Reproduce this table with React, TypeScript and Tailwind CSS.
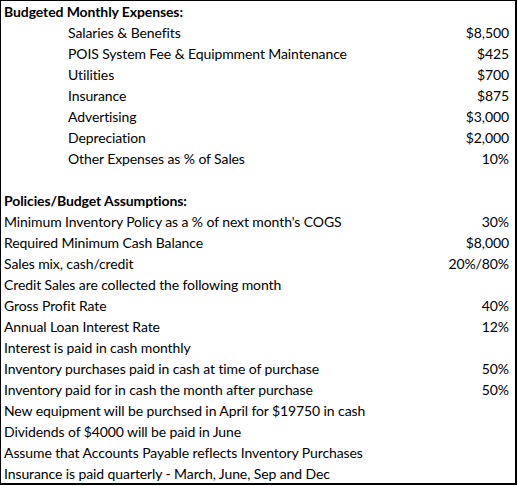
type Row = { label?: string; value?: string; bold?: boolean; indent?: boolean };

const rows: Row[] = [
  { label: "Budgeted Monthly Expenses:", bold: true },
  { label: "Salaries & Benefits", value: "$8,500", indent: true },
  { label: "POIS System Fee & Equipmment Maintenance", value: "$425", indent: true },
  { label: "Utilities", value: "$700", indent: true },
  { label: "Insurance", value: "$875", indent: true },
  { label: "Advertising", value: "$3,000", indent: true },
  { label: "Depreciation", value: "$2,000", indent: true },
  { label: "Other Expenses as % of Sales", value: "10%", indent: true },
  {},
  { label: "Policies/Budget Assumptions:", bold: true },
  { label: "Minimum Inventory Policy as a % of next month's COGS", value: "30%" },
  { label: "Required Minimum Cash Balance", value: "$8,000" },
  { label: "Sales mix, cash/credit", value: "20%/80%" },
  { label: "Credit Sales are collected the following month" },
  { label: "Gross Profit Rate", value: "40%" },
  { label: "Annual Loan Interest Rate", value: "12%" },
  { label: "Interest is paid in cash monthly" },
  { label: "Inventory purchases paid in cash at time of purchase", value: "50%" },
  { label: "Inventory paid for in cash the month after purchase", value: "50%" },
  { label: "New equipment will be purchsed in April for $19750 in cash" },
  { label: "Dividends of $4000 will be paid in June" },
  { label: "Assume that Accounts Payable reflects Inventory Purchases" },
  { label: "Insurance is paid quarterly - March, June, Sep and Dec" },
];

export default function App() {
  return (
    <div className="h-[486px] w-[518px] bg-white">
      <div className="h-[485px] w-[517px] border-l border-t border-r-2 border-b-2 border-black font-['Lato',sans-serif] text-[14px] tracking-[-0.1px] text-black">
        {rows.map((row, i) => (
          <div key={i} className="flex h-[21px] items-center justify-between pl-[3px] pr-[6px] leading-[21px]">
            <span className={`whitespace-nowrap ${row.bold ? "font-bold" : ""} ${row.indent ? "pl-[64px]" : ""}`}>
              {row.label ?? ""}
            </span>
            {row.value && <span className="whitespace-nowrap">{row.value}</span>}
          </div>
        ))}
      </div>
    </div>
  );
}
